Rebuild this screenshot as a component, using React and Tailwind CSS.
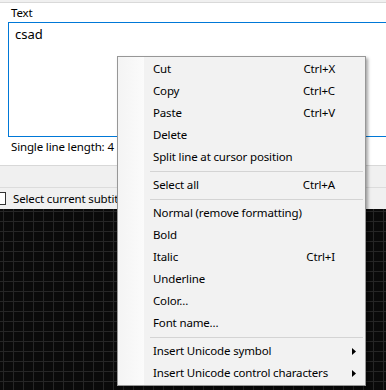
const FONT = { fontFamily: '"Segoe UI", "Noto Sans", "Open Sans", sans-serif' };

const MENU = [
  { label: "Cut", key: "Ctrl+X" },
  { label: "Copy", key: "Ctrl+C" },
  { label: "Paste", key: "Ctrl+V" },
  { label: "Delete" },
  { label: "Split line at cursor position" },
  { sep: true },
  { label: "Select all", key: "Ctrl+A" },
  { sep: true },
  { label: "Normal (remove formatting)" },
  { label: "Bold" },
  { label: "Italic", key: "Ctrl+I" },
  { label: "Underline" },
  { label: "Color..." },
  { label: "Font name..." },
  { sep: true },
  { label: "Insert Unicode symbol", sub: true },
  { label: "Insert Unicode control characters", sub: true },
];

function ContextMenu() {
  return (
    <div className="absolute left-[117px] top-[56px] w-[249px] border border-[#979797] bg-[#f2f2f2] py-[1px] shadow-[2px_2px_3px_rgba(0,0,0,0.35)]">
      <div className="absolute left-0 top-0 bottom-0 w-[26px] bg-gradient-to-r from-[#f4f4f4] to-[#fbfbfb]" />
      <div className="relative">
        {MENU.map((m, i) =>
          m.sep ? (
            <div key={i} className="h-[6px] flex items-center pl-[32px] pr-[2px]">
              <div className="h-px w-full bg-[#d4d4d4]" />
            </div>
          ) : (
            <div key={i} className="h-[22px] flex items-center pl-[35px] pr-[9px] text-[11.5px] tracking-[-0.15px] text-black">
              <span className="flex-1 whitespace-nowrap">{m.label}</span>
              {m.key && <span className="mr-[21px] whitespace-nowrap">{m.key}</span>}
              {m.sub && (
                <svg width="4" height="7" viewBox="0 0 4 7"><path d="M0 0 L4 3.5 L0 7 Z" fill="#000" /></svg>
              )}
            </div>
          )
        )}
      </div>
    </div>
  );
}

export default function App() {
  return (
    <div className="relative w-[386px] h-[390px] overflow-hidden bg-white text-[11.5px] tracking-[-0.15px]" style={FONT}>
      <div className="h-[2px] bg-[#f0f0f0]" />
      <div className="h-px bg-[#d9d9d9]" />
      <div className="pl-[11px] h-[19px] flex items-center text-black">Text</div>
      <div className="ml-[8px] h-[115px] border border-r-0 border-[#0078d7] pl-[6px] pt-[2px] text-[13px] tracking-normal text-black">csad</div>
      <div className="pl-[11px] h-[20px] flex items-center text-black">Single line length: 4</div>
      <div className="h-[8px]" />
      <div className="h-px bg-[#d8d8d8]" />
      <div className="h-[21px] bg-[#f0f0f0]" />
      <div className="h-px bg-[#dcdcdc]" />
      <div className="h-[21px] bg-[#f0f0f0] flex items-center">
        <div className="w-[13px] h-[13px] ml-[-7px] border border-[#333] bg-white shrink-0" />
        <div className="ml-[7px] w-[111px] overflow-hidden whitespace-nowrap text-black">Select current subtitle while playing</div>
      </div>
      <div className="h-[182px] bg-[#0a0a0a] bg-[linear-gradient(to_right,#262626_1px,transparent_1px),linear-gradient(to_bottom,#262626_1px,transparent_1px)] bg-[size:10px_10px] bg-[position:3px_2px]" />
      <ContextMenu />
    </div>
  );
}
